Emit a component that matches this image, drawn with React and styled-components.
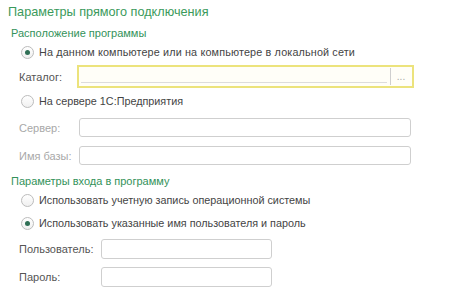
import styled, { createGlobalStyle } from 'styled-components';

const GlobalStyle = createGlobalStyle`
  html, body {
    margin: 0;
    padding: 0;
    background: #fff;
  }
  body {
    font-family: "Liberation Sans", Arial, sans-serif;
    color: #444;
  }
`;

const Page = styled.div`
  width: 474px;
  height: 295px;
  padding: 2px 0 0 8px;
  box-sizing: border-box;
  display: flex;
  flex-direction: column;
  overflow: hidden;
`;

const Title = styled.div`
  font-size: 12.7px;
  line-height: 20px;
  height: 20px;
  color: #3b9a5b;
`;

const GroupTitle = styled.div`
  font-size: 11px;
  line-height: 16px;
  height: 16px;
  margin: ${p => p.$top}px 0 0 3px;
  color: #33925a;
`;

const RadioRow = styled.label`
  display: flex;
  align-items: center;
  gap: 5px;
  height: 20px;
  margin: ${p => p.$top || 0}px 0 0 13px;
  font-size: 10.8px;
  letter-spacing: ${p => p.$spacing || 0}px;
  color: #444;
`;

const RadioMark = styled.span`
  width: 11px;
  height: 11px;
  border: 1px solid #bcbcbc;
  border-radius: 50%;
  background: linear-gradient(#fff, #f0f0f0);
  display: flex;
  align-items: center;
  justify-content: center;
  flex-shrink: 0;

  &::after {
    content: '';
    width: 5px;
    height: 5px;
    border-radius: 50%;
    background: ${p => (p.$checked ? '#2f6f55' : 'transparent')};
  }
`;

const FieldRow = styled.div`
  display: flex;
  align-items: center;
  margin: ${p => p.$top}px 0 0 11px;
`;

const FieldLabel = styled.span`
  width: ${p => p.$width}px;
  font-size: 11px;
  color: ${p => (p.$disabled ? '#a8a8a8' : '#555')};
  flex-shrink: 0;
`;

const Input = styled.div`
  width: ${p => p.$width}px;
  height: ${p => p.$height || 20}px;
  box-sizing: border-box;
  border: 1px solid #cfcfcf;
  border-radius: 3px;
  background: #fff;
`;

const PickerBox = styled.div`
  width: 337px;
  height: 23px;
  box-sizing: border-box;
  border: 2px solid #ece37c;
  background: #fffef8;
  display: flex;
  align-items: stretch;
  padding: 1px 1px 1px 2px;
`;

const PickerText = styled.div`
  flex: 1;
  border-bottom: 1px solid #dcdcdc;
  margin-bottom: 2px;
`;

const PickerButton = styled.div`
  width: 20px;
  border-left: 1px solid #cfcfcf;
  margin-left: 3px;
  color: #aaa;
  font-size: 10px;
  line-height: 17px;
  text-align: center;
`;

export default function App() {
  return (
    <Page>
      <GlobalStyle />
      <Title>Параметры прямого подключения</Title>

      <GroupTitle $top={3}>Расположение программы</GroupTitle>
      <RadioRow $top={1} $spacing={0.15}>
        <RadioMark $checked />
        На данном компьютере или на компьютере в локальной сети
      </RadioRow>
      <FieldRow $top={3}>
        <FieldLabel $width={58}>Каталог:</FieldLabel>
        <PickerBox>
          <PickerText />
          <PickerButton>...</PickerButton>
        </PickerBox>
      </FieldRow>
      <RadioRow $top={3}>
        <RadioMark />
        На сервере 1С:Предприятия
      </RadioRow>
      <FieldRow $top={7}>
        <FieldLabel $width={60} $disabled>Сервер:</FieldLabel>
        <Input $width={332} $height={19} />
      </FieldRow>
      <FieldRow $top={9}>
        <FieldLabel $width={60} $disabled>Имя базы:</FieldLabel>
        <Input $width={332} $height={19} />
      </FieldRow>

      <GroupTitle $top={8}>Параметры входа в программу</GroupTitle>
      <RadioRow $top={1}>
        <RadioMark />
        Использовать учетную запись операционной системы
      </RadioRow>
      <RadioRow $top={3}>
        <RadioMark $checked />
        Использовать указанные имя пользователя и пароль
      </RadioRow>
      <FieldRow $top={6}>
        <FieldLabel $width={82}>Пользователь:</FieldLabel>
        <Input $width={171} />
      </FieldRow>
      <FieldRow $top={8}>
        <FieldLabel $width={82}>Пароль:</FieldLabel>
        <Input $width={171} />
      </FieldRow>
    </Page>
  );
}
